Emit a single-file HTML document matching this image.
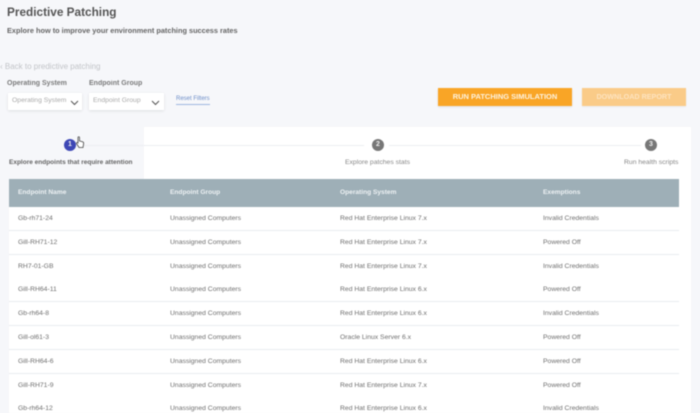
<!DOCTYPE html>
<html><head><meta charset="utf-8">
<style>
html,body{margin:0;padding:0;width:700px;height:413px;overflow:hidden;background:#f6f7fa;font-family:"Liberation Sans",sans-serif}
#p{position:relative;width:700px;height:413px;overflow:hidden;filter:blur(.55px)}
.a{position:absolute;white-space:nowrap}
.row{position:absolute;left:9px;width:670px;height:24px;background:#fff;border-bottom:1px solid #e9ecef;box-sizing:border-box}
.c{position:absolute;top:5.5px;font-size:6.8px;line-height:12px;color:#6f6f6f;white-space:nowrap}
.c1{left:9px}.c2{left:161px}.c3{left:331px}.c4{left:534px}
.sel{position:absolute;top:93px;height:17px;background:#fff;box-shadow:0 1px 3px rgba(0,0,0,.1);font-size:6.8px;line-height:16px;color:#aaa;padding-left:4px;box-sizing:border-box}
.num{position:absolute;width:12px;height:12px;border-radius:50%;color:#eee;font-size:7px;font-weight:bold;line-height:12px;text-align:center}
.h{position:absolute;top:186.5px;font-size:6.6px;font-weight:bold;line-height:12px;color:#eef2f4}
</style></head><body><div id="p">
<div class="a" style="left:7px;top:3px;font-size:11.8px;line-height:18px;font-weight:bold;color:#555">Predictive Patching</div>
<div class="a" style="left:7px;top:25px;font-size:7.35px;line-height:12px;font-weight:bold;color:#666">Explore how to improve your environment patching success rates</div>
<div class="a" style="left:0;top:61px;font-size:8px;line-height:12px;color:#c2c4c8">‹&nbsp;Back to predictive patching</div>
<div class="a" style="left:7px;top:78px;font-size:7px;line-height:12px;color:#666;font-weight:bold;opacity:.85">Operating System</div>
<div class="a" style="left:89px;top:78px;font-size:7px;line-height:12px;color:#666;font-weight:bold;opacity:.85">Endpoint Group</div>
<div class="sel" style="left:8px;width:74px">Operating System<svg style="position:absolute;left:62px;top:7px" width="9" height="6"><path d="M1 1l3.5 3.5L8 1" fill="none" stroke="#555" stroke-width="1"/></svg></div>
<div class="sel" style="left:89px;width:75px">Endpoint Group<svg style="position:absolute;left:62px;top:7px" width="9" height="6"><path d="M1 1l3.5 3.5L8 1" fill="none" stroke="#555" stroke-width="1"/></svg></div>
<div class="a" style="left:176px;top:94px;font-size:6px;line-height:10px;color:#6f8fc9;border-bottom:1px solid #9fb8e0">Reset Filters</div>

<div class="a" style="left:438px;top:88px;width:134px;height:18px;background:#f9a526;box-shadow:0 1px 2px rgba(0,0,0,.1);color:#fdf3e0;font-size:7.5px;font-weight:bold;line-height:18px;text-align:center">RUN PATCHING SIMULATION</div>
<div class="a" style="left:582px;top:88px;width:104px;height:18px;background:#facb88;box-shadow:0 1px 2px rgba(0,0,0,.06);color:#fde3bf;font-size:7.2px;font-weight:bold;line-height:18px;text-align:center">DOWNLOAD REPORT</div>

<div class="a" style="left:144px;top:127px;width:547px;height:286px;background:#fff"></div>
<div class="a" style="left:84px;top:145px;width:280px;height:1px;background:#eceef1"></div>
<div class="a" style="left:389px;top:145px;width:252px;height:1px;background:#eceef1"></div>
<div class="num" style="left:64px;top:139px;background:#3d47b5">1</div>
<div class="num" style="left:372px;top:139px;background:#777">2</div>
<div class="num" style="left:645px;top:139px;background:#777">3</div>
<svg class="a" style="left:75px;top:136px" width="10" height="13"><path d="M3 1.5c0-1 1.5-1 1.5 0V5l3 .8c1 .3 1.3 1 1.1 2L8 11.5H4L1.5 7.5c-.4-.9.5-1.4 1.5-.6z" fill="#fff" stroke="#444" stroke-width=".8"/></svg>
<div class="a" style="left:9px;top:157px;font-size:6.5px;line-height:12px;color:#555;font-weight:bold;opacity:.9">Explore endpoints that require attention</div>
<div class="a" style="left:345px;top:157px;font-size:6.8px;line-height:12px;color:#888">Explore patches stats</div>
<div class="a" style="left:624px;top:157px;font-size:6.8px;line-height:12px;color:#888">Run health scripts</div>

<div class="a" style="left:9px;top:179px;width:670px;height:28px;background:#9eafb7"></div>
<div class="h" style="left:18px">Endpoint Name</div>
<div class="h" style="left:170px">Endpoint Group</div>
<div class="h" style="left:340px">Operating System</div>
<div class="h" style="left:543px">Exemptions</div>

<div class="row" style="top:207px"><span class="c c1">Gb-rh71-24</span><span class="c c2">Unassigned Computers</span><span class="c c3">Red Hat Enterprise Linux 7.x</span><span class="c c4">Invalid Credentials</span></div>
<div class="row" style="top:231px"><span class="c c1">Gill-RH71-12</span><span class="c c2">Unassigned Computers</span><span class="c c3">Red Hat Enterprise Linux 7.x</span><span class="c c4">Powered Off</span></div>
<div class="row" style="top:255px"><span class="c c1">RH7-01-GB</span><span class="c c2">Unassigned Computers</span><span class="c c3">Red Hat Enterprise Linux 7.x</span><span class="c c4">Invalid Credentials</span></div>
<div class="row" style="top:278px"><span class="c c1">Gill-RH64-11</span><span class="c c2">Unassigned Computers</span><span class="c c3">Red Hat Enterprise Linux 6.x</span><span class="c c4">Powered Off</span></div>
<div class="row" style="top:302px"><span class="c c1">Gb-rh64-8</span><span class="c c2">Unassigned Computers</span><span class="c c3">Red Hat Enterprise Linux 6.x</span><span class="c c4">Invalid Credentials</span></div>
<div class="row" style="top:326px"><span class="c c1">Gill-ol61-3</span><span class="c c2">Unassigned Computers</span><span class="c c3">Oracle Linux Server 6.x</span><span class="c c4">Powered Off</span></div>
<div class="row" style="top:350px"><span class="c c1">Gill-RH64-6</span><span class="c c2">Unassigned Computers</span><span class="c c3">Red Hat Enterprise Linux 6.x</span><span class="c c4">Powered Off</span></div>
<div class="row" style="top:374px"><span class="c c1">Gill-RH71-9</span><span class="c c2">Unassigned Computers</span><span class="c c3">Red Hat Enterprise Linux 7.x</span><span class="c c4">Powered Off</span></div>
<div class="row" style="top:397px"><span class="c c1">Gb-rh64-12</span><span class="c c2">Unassigned Computers</span><span class="c c3">Red Hat Enterprise Linux 6.x</span><span class="c c4">Invalid Credentials</span></div>
</div></body></html>
